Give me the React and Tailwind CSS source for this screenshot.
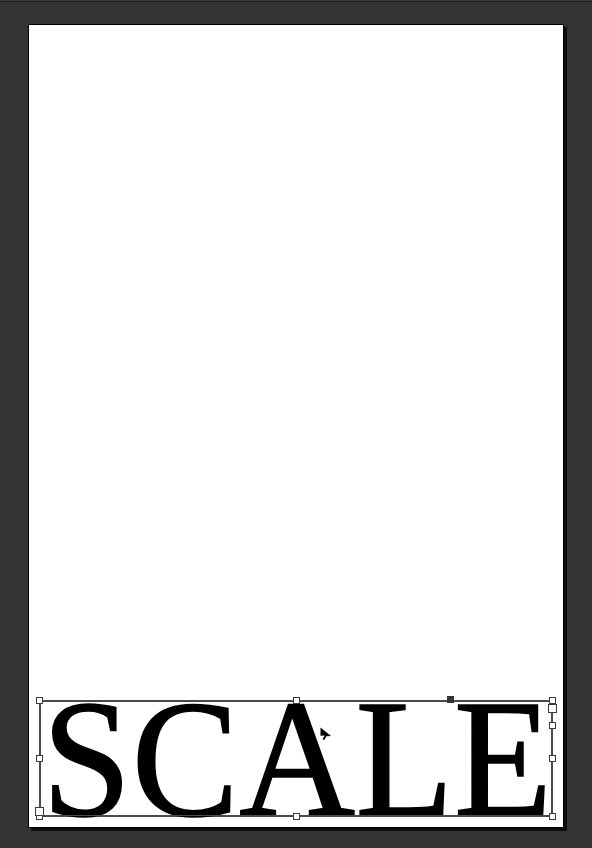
const Handle = ({ x, y, size = 7 }) => (
  <div
    className="absolute border border-[#3a3a3a] bg-white"
    style={{
      left: x - size / 2,
      top: y - size / 2,
      width: size,
      height: size,
    }}
  />
);

const Cursor = () => (
  <svg
    className="absolute left-[280px] top-[26px]"
    width="12"
    height="14"
    viewBox="0 0 12 14"
  >
    <path d="M0.5 0.5 L11 9 L6.5 9.2 L4.2 13 L2.6 12.2 L4.6 8.6 L0.5 8.8 Z" fill="#000" />
  </svg>
);

export default function App() {
  const handles = [
    { x: 0, y: 0 },
    { x: 257, y: 0 },
    { x: 513, y: 0 },
    { x: 513, y: 8, size: 9 },
    { x: 513, y: 25 },
    { x: 513, y: 58 },
    { x: 513, y: 116 },
    { x: 257, y: 116 },
    { x: 0, y: 116 },
    { x: 0, y: 111, size: 9 },
    { x: 0, y: 58 },
  ];

  return (
    <div className="w-[592px] h-[848px] bg-[#333333] flex flex-col overflow-hidden">
      <div className="h-px bg-[#383838]" />
      <div className="h-px bg-[#1e1e1e]" />

      {/* page */}
      <div className="mt-[22px] ml-[28px] w-[536px] h-[804px] bg-white border border-black shadow-[3px_3px_0_#0c0c0c] flex flex-col justify-end">
        {/* text frame */}
        <div className="relative ml-[10px] mb-[10px] w-[514px] h-[117px] border border-[#4a4a4a]">
          <div className="ml-[2px] w-max origin-left scale-x-[0.955] whitespace-nowrap text-black text-[168px] leading-[115px] tracking-[0.5px] font-['Liberation_Serif'] [-webkit-text-stroke:1.6px_black]">
            SCALE
          </div>
          <div className="absolute inset-0 border border-[#4a4a4a]" />
          {handles.map((h, i) => (
            <Handle key={i} x={h.x - 1} y={h.y - 1} size={h.size} />
          ))}
          <div className="absolute left-[407px] top-[-5px] w-[7px] h-[7px] bg-[#333]" />
          <Cursor />
        </div>
      </div>
    </div>
  );
}
